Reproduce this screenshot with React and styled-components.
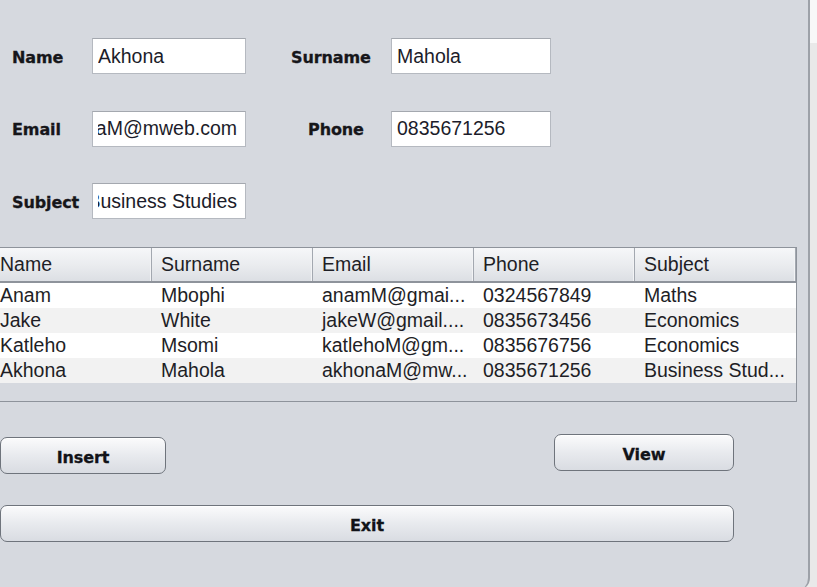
import React from "react";
import styled, { createGlobalStyle } from "styled-components";

const rows = [
  ["Anam", "Mbophi", "anamM@gmai...", "0324567849", "Maths"],
  ["Jake", "White", "jakeW@gmail....", "0835673456", "Economics"],
  ["Katleho", "Msomi", "katlehoM@gm...", "0835676756", "Economics"],
  ["Akhona", "Mahola", "akhonaM@mw...", "0835671256", "Business Stud..."],
];

const columns = ["Name", "Surname", "Email", "Phone", "Subject"];

function TextField({ children, scrolled }) {
  return (
    <Field>
      <FieldView $scrolled={scrolled}>
        <span>{children}</span>
      </FieldView>
    </Field>
  );
}

function App() {
  return (
    <>
      <GlobalStyle />
      <Screen>
        <Window>
          <Form>
            <Label>Name</Label>
            <TextField>Akhona</TextField>
            <Label $indent={45}>Surname</Label>
            <TextField>Mahola</TextField>

            <Label>Email</Label>
            <TextField scrolled>akhonaM@mweb.com</TextField>
            <Label $indent={62}>Phone</Label>
            <TextField>0835671256</TextField>

            <Label>Subject</Label>
            <TextField scrolled>Business Studies</TextField>
          </Form>

          <Table>
            <HeaderRow>
              {columns.map((col) => (
                <HeaderCell key={col}>{col}</HeaderCell>
              ))}
            </HeaderRow>
            <Body>
              {rows.map((row, i) => (
                <Row key={i} $odd={i % 2 === 1}>
                  {row.map((cell, j) => (
                    <Cell key={j}>{cell}</Cell>
                  ))}
                </Row>
              ))}
            </Body>
          </Table>

          <ButtonRow>
            <Button $width={166} $offset={3}>
              Insert
            </Button>
            <Button $width={180}>View</Button>
          </ButtonRow>
          <Button $width={734}>Exit</Button>
        </Window>
        <Edge />
      </Screen>
    </>
  );
}

export default App;

const GlobalStyle = createGlobalStyle`
  html, body {
    margin: 0;
    padding: 0;
    overflow: hidden;
    background: #ececec;
  }
`;

const Screen = styled.div`
  display: flex;
  width: 817px;
  height: 587px;
  overflow: hidden;
`;

const Window = styled.div`
  width: 810px;
  height: 590px;
  flex-shrink: 0;
  box-sizing: border-box;
  background: #d6d9df;
  border-right: 2px solid #9da1a8;
  border-bottom-right-radius: 12px;
  display: flex;
  flex-direction: column;
  align-items: flex-start;
`;

const Edge = styled.div`
  flex: 1;
  background: linear-gradient(#f8f8f8 0 43px, #e9e9e9 43px);
`;

const Form = styled.div`
  display: grid;
  grid-template-columns: 80px 154px 145px 160px;
  grid-auto-rows: 36px;
  row-gap: 36.5px;
  padding: 38px 0 0 12px;
  align-items: center;
`;

const Label = styled.div`
  padding-left: ${(p) => p.$indent || 0}px;
  padding-top: 2px;
  font-family: "DejaVu Sans", sans-serif;
  font-weight: bold;
  font-size: 16px;
  letter-spacing: -0.1px;
  color: #16161a;
  -webkit-text-stroke: 0.3px #16161a;
`;

const Field = styled.div`
  height: 36px;
  box-sizing: border-box;
  background: #ffffff;
  border: 1px solid #b5b9c0;
  border-top-color: #a4a8af;
  display: flex;
  align-items: center;
  padding: 0 8px 0 5px;
  font-family: "Liberation Sans", Arial, sans-serif;
  font-size: 19.5px;
  color: #1c1c2a;
`;

const FieldView = styled.div`
  flex: 1;
  min-width: 0;
  display: flex;
  justify-content: ${(p) => (p.$scrolled ? "flex-end" : "flex-start")};
  overflow: hidden;
  white-space: nowrap;

  > span {
    flex-shrink: 0;
  }
`;

const Table = styled.div`
  margin: 28px 0 0 -9px;
  width: 806px;
  box-sizing: border-box;
  border: 1px solid #8e939b;
  border-left: none;
  font-family: "Liberation Sans", Arial, sans-serif;
  font-size: 19.5px;
  color: #1e1e26;
`;

const HeaderRow = styled.div`
  display: grid;
  grid-template-columns: repeat(5, 161px);
  height: 35px;
  box-sizing: border-box;
  background: linear-gradient(#f6f7f9, #e9ebee 55%, #dcdfe4);
  border-bottom: 2px solid #8e939b;
`;

const HeaderCell = styled.div`
  display: flex;
  align-items: center;
  padding-left: 9px;
  border-right: 1px solid #a3a8b0;
  box-shadow: inset -1px 0 0 #f2f3f5;
`;

const Body = styled.div`
  height: 118px;
  background: #d6d9df;
`;

const Row = styled.div`
  display: grid;
  grid-template-columns: repeat(5, 161px);
  height: 25px;
  align-items: center;
  background: ${(p) => (p.$odd ? "#f2f2f2" : "#ffffff")};
`;

const Cell = styled.div`
  padding-left: 9px;
  white-space: nowrap;
  overflow: hidden;
`;

const ButtonRow = styled.div`
  display: flex;
  justify-content: space-between;
  align-items: flex-start;
  width: 734px;
  margin-top: 32px;
  margin-bottom: 31px;
`;

const Button = styled.button`
  width: ${(p) => p.$width}px;
  height: 37px;
  margin-top: ${(p) => p.$offset || 0}px;
  box-sizing: border-box;
  border: 1px solid #6f747c;
  border-radius: 7px;
  background: linear-gradient(#fbfbfc, #e8eaee 50%, #d9dce2);
  box-shadow: inset 0 1px 0 #ffffff;
  font-family: "DejaVu Sans", sans-serif;
  font-weight: bold;
  font-size: 16px;
  letter-spacing: -0.1px;
  color: #111318;
  -webkit-text-stroke: 0.3px #111318;
  padding: 3px 0 0;
  cursor: pointer;
`;
